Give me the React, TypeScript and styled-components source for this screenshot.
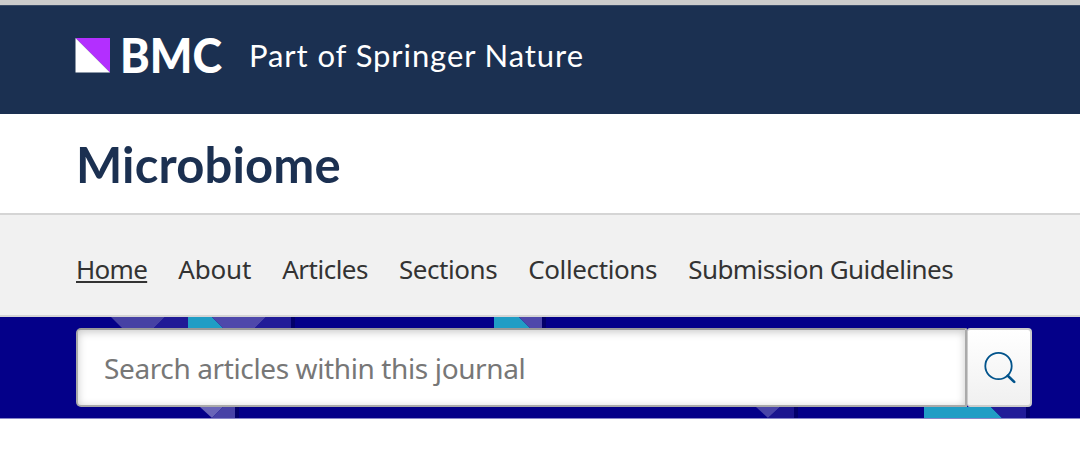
import React, {useState} from "react";
import styled, {createGlobalStyle} from "styled-components";

const GlobalStyle = createGlobalStyle`
  * {
    box-sizing: border-box;
  }
  body {
    margin: 0;
    background: #fff;
    overflow: hidden;
  }
`;

const Page = styled.div`
  height: 452px;
  background: #fff;
  font-family: "Noto Sans", "Open Sans", sans-serif;
`;

const Header = styled.header`
  height: 114px;
  padding: 10px 70px 0;
  border-top: 5px solid #ccc;
  background: #1b3051;
  box-shadow: inset 0 1px 0 #3a4b66;
`;

const TitleBar = styled.div`
  display: flex;
  align-items: center;
  height: 99px;
  padding: 0 76px;
`;

const Title = styled.h1`
  margin: 0;
  color: #1b3051;
  font: 700 49px/60px Lato, sans-serif;
  letter-spacing: 0.15px;
`;

const Nav = styled.nav`
  display: flex;
  align-items: center;
  gap: 31px;
  height: 104px;
  padding: 8px 76px 0;
  border-top: 2px solid #d5d5d5;
  border-bottom: 2px solid #d5d5d5;
  background: #f1f1f1;
`;

const NavItem = styled.a<{$active?: boolean; $spacing: number}>`
  color: #333;
  font-size: 26px;
  line-height: 36px;
  white-space: nowrap;
  text-decoration: ${p => p.$active ? "underline" : "none"};
  text-decoration-thickness: 2px;
  text-underline-offset: 2px;
  letter-spacing: ${p => p.$spacing}px;
`;

const Banner = styled.section`
  position: relative;
  height: 102px;
  padding: 11px 48px 0 76px;
  background: #040089;
  border-bottom: 1px solid #8886c8;
`;

const Pattern = styled.svg`
  position: absolute;
  top: 0;
  left: 0;
`;

const SearchForm = styled.form`
  position: relative;
  display: flex;
  height: 79px;
`;

const SearchInput = styled.input`
  width: 891px;
  padding: 1px 26px 0;
  border: 2px solid #aaa;
  border-top-color: #999;
  border-radius: 5px 0 0 5px;
  outline: none;
  background: #fff;
  box-shadow: inset 0 2px 8px rgba(0, 0, 0, 0.22);
  color: #333;
  font: 28px "Noto Sans", "Open Sans", sans-serif;
  letter-spacing: -0.38px;
  &::placeholder {
    color: #777;
    opacity: 1;
  }
`;

const SearchButton = styled.button`
  width: 65px;
  padding: 0;
  border: 2px solid #ccc;
  border-left-width: 1px;
  border-radius: 3px 4px 4px 3px;
  background: linear-gradient(#fff, #f0f0f0);
  cursor: pointer;
  svg {
    display: block;
    margin: 0 auto;
  }
`;

const items = [
  {name: "Home", spacing: -0.7},
  {name: "About", spacing: -0.15},
  {name: "Articles", spacing: -0.5},
  {name: "Sections", spacing: -0.45},
  {name: "Collections", spacing: -0.37},
  {name: "Submission Guidelines", spacing: -0.55},
];

const Logo: React.FC = () => (
  <svg width="540" height="80" viewBox="70 15 540 80" fill="#fff" style={{display: "block"}}>
    <path d="M75.500 38H110v34.500z" fill="#b32fff" />
    <path d="M75.500 38v34.500H110z" />
    <text x="120" y="72.500" fontFamily="Lato" fontWeight="900" fontSize="47.500" textLength="102" lengthAdjust="spacingAndGlyphs">BMC</text>
    <text x="249" y="67" fontFamily="Lato" fontSize="31" textLength="334" lengthAdjust="spacing">Part of Springer Nature</text>
  </svg>
);

const BannerPattern: React.FC = () => (
  <Pattern width="1080" height="101" viewBox="0 0 1080 101">
    <path d="M111 0h54l-12 12h-30z" fill="#4641a4" />
    <path d="M165 0h23v12h-35z" fill="#201a96" />
    <path d="M188 0h24l12 12h-36z" fill="#209dc5" />
    <path d="M212 0h54l-12 12h-30z" fill="#4e48ab" />
    <path d="M266 0h25v12h-37z" fill="#211c98" />
    <path d="M494 0h25l12 12h-37z" fill="#209dc5" />
    <path d="M519 0h23v12h-11z" fill="#4e48ab" />
    <path d="M200 90h23l-11 11z" fill="#6965b8" />
    <path d="M223 90h12v11h-23z" fill="#4742a6" />
    <path d="M756 90h24l-12 11z" fill="#4944a7" />
    <path d="M780 90h14v11h-26z" fill="#1b158f" />
    <path d="M924 90h67l11 11h-78z" fill="#209dc5" />
    <path d="M991 90h35v11h-24z" fill="#211c98" />
    <path d="M291 0h4v12h-4zM542 0h4v12h-4zM235 90h4v11h-4zM794 90h4v11h-4zM1026 90h4v11h-4z" fill="#02006b" />
  </Pattern>
);

const App: React.FC = () => {
  const [query, setQuery] = useState("");

  return (
    <Page>
      <GlobalStyle />
      <Header>
        <Logo />
      </Header>
      <TitleBar>
        <Title>Microbiome</Title>
      </TitleBar>
      <Nav>
        {items.map((item, i) => (
          <NavItem key={item.name} $active={i === 0} $spacing={item.spacing}>{item.name}</NavItem>
        ))}
      </Nav>
      <Banner>
        <BannerPattern />
        <SearchForm onSubmit={e => e.preventDefault()}>
          <SearchInput
            value={query}
            placeholder="Search articles within this journal"
            onChange={e => setQuery(e.target.value)}
          />
          <SearchButton type="submit" aria-label="Search">
            <svg width="34" height="34" viewBox="-1 0.5 34 34" fill="none" stroke="#01538b">
              <circle cx="15.500" cy="15.500" r="13.200" strokeWidth="1.800" />
              <path d="M24.800 25.200l6.400 6.200" strokeWidth="2.600" strokeLinecap="round" />
            </svg>
          </SearchButton>
        </SearchForm>
      </Banner>
    </Page>
  );
};

export default App;
